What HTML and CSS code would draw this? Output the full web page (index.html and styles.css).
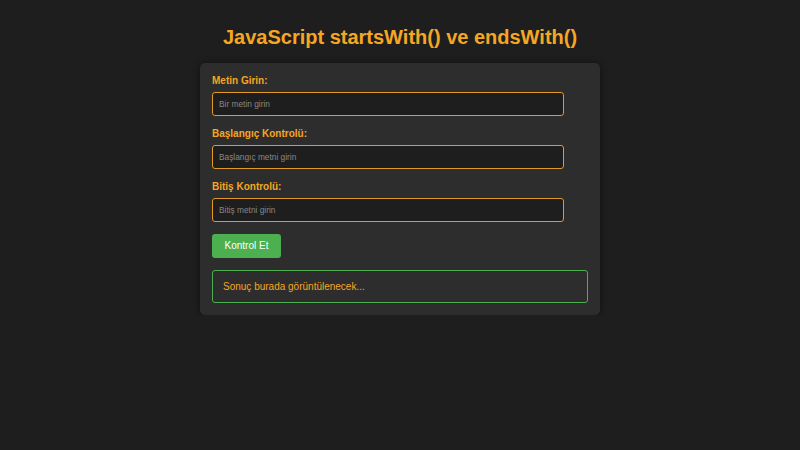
FILE: index.html
```html
<!DOCTYPE html>
<html lang="tr">
<head>
    <meta charset="UTF-8">
    <meta name="viewport" content="width=device-width, initial-scale=1.0">
    <title>startsWith() ve endsWith()</title>
    <link rel="stylesheet" href="styles.css">
</head>
<body>

    <h1>JavaScript startsWith() ve endsWith()</h1>

    <div class="container">
        <label for="text">Metin Girin:</label>
        <input type="text" id="text" placeholder="Bir metin girin">

        <label for="start">Başlangıç Kontrolü:</label>
        <input type="text" id="start" placeholder="Başlangıç metni girin">

        <label for="end">Bitiş Kontrolü:</label>
        <input type="text" id="end" placeholder="Bitiş metni girin">

        <button onclick="checkText()">Kontrol Et</button>

        <div id="result" class="result">Sonuç burada görüntülenecek...</div>
    </div>

    <script>
        function checkText() {
            let text = document.getElementById("text").value;
            let start = document.getElementById("start").value;
            let end = document.getElementById("end").value;

            if (text === "") {
                document.getElementById("result").innerText = "Lütfen bir metin girin.";
                return;
            }

            let startsWith = text.startsWith(start);
            let endsWith = text.endsWith(end);

            document.getElementById("result").innerText =
                `startsWith("${start}"): ${startsWith} | endsWith("${end}"): ${endsWith}`;
        }
    </script>

</body>
</html>
```

FILE: styles.css
```css
body {
    font-family: "Liberation Sans", Arial, sans-serif;
    background-color: #1e1e1e;
    color: #f5a623;
    margin: 0;
    padding: 26px 0 0;
}
h1 {
    font-size: 20px;
    text-align: center;
    margin: 0 0 14px;
    line-height: 23px;
}
.container {
    width: 376px;
    margin: 0 auto;
    background: #2d2d2d;
    padding: 12px;
    border-radius: 5px;
    box-shadow: 0px 0px 6px rgba(0, 0, 0, 0.5);
}
label {
    display: block;
    font-size: 10px;
    font-weight: bold;
    line-height: 12px;
    margin: 0 0 5px;
}
input {
    display: block;
    width: 90%;
    padding: 6px;
    margin: 0 0 12px;
    border-radius: 3px;
    border: 1px solid #e09a25;
    background: #1e1e1e;
    color: #fff;
    font-family: "Liberation Sans", Arial, sans-serif;
    font-size: 8.33px;
    line-height: 10px;
}
input::placeholder {
    color: #888;
}
button {
    display: block;
    background-color: #4caf50;
    color: white;
    font-family: "Liberation Sans", Arial, sans-serif;
    font-size: 10px;
    line-height: 12px;
    padding: 6px 12.5px;
    border: none;
    border-radius: 3px;
    cursor: pointer;
}
.result {
    margin-top: 12px;
    padding: 9.5px 10px;
    border: 1px solid #4caf50;
    border-radius: 3px;
    font-size: 10px;
    line-height: 12px;
}
```
